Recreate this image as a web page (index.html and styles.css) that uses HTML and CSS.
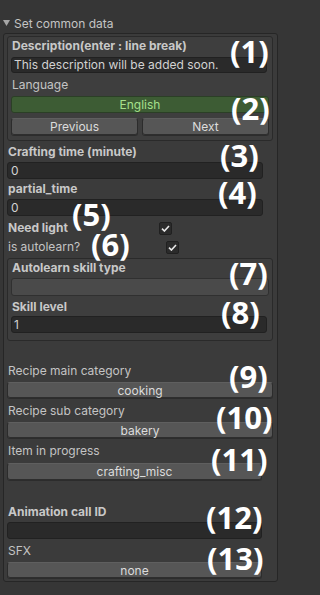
FILE: index.html
```html
<!DOCTYPE html>
<html>
<head>
<meta charset="utf-8">
<link rel="stylesheet" href="styles.css">
</head>
<body>
<div class="page">
  <div class="foldout">
    <svg class="tri" width="7" height="6" viewBox="0 0 7 6"><path d="M0 0 H7 L3.5 6 Z" fill="#a6a6a6"/></svg>
    <span>Set common data</span>
  </div>
  <div class="outer">
    <div class="group g1">
      <div class="lbl bold">Description(enter : line break)</div>
      <div class="field mt2 h16 mr2 pad2">This description will be added soon.</div>
      <div class="lbl mt3">Language</div>
      <div class="lang mt2">English</div>
      <div class="btnrow">
        <div class="btn">Previous</div>
        <div class="btn">Next</div>
      </div>
    </div>

    <div class="lbl bold out mt2">Crafting time (minute)</div>
    <div class="field mt1 mr10">0</div>
    <div class="lbl bold out mt1">partial_time</div>
    <div class="field mt1 mr10">0</div>

    <div class="toggle t1">
      <span class="lbl bold out">Need light</span>
      <span class="check"><svg width="9" height="7" viewBox="0 0 9 7"><path d="M1 3.6 L3.4 6 L8 1" fill="none" stroke="#e8e8e8" stroke-width="1.6"/></svg></span>
    </div>
    <div class="toggle t2">
      <span class="lbl out">is autolearn?</span>
      <span class="check"><svg width="9" height="7" viewBox="0 0 9 7"><path d="M1 3.6 L3.4 6 L8 1" fill="none" stroke="#e8e8e8" stroke-width="1.6"/></svg></span>
    </div>

    <div class="group g2">
      <div class="lbl bold">Autolearn skill type</div>
      <div class="popup mt1"></div>
      <div class="lbl bold mt2">Skill level</div>
      <div class="field mr2 pad2">1</div>
    </div>

    <div class="lbl out norm mt21">Recipe main category</div>
    <div class="btn wide mt2">cooking</div>
    <div class="lbl out norm mt3">Recipe sub category</div>
    <div class="btn wide mt2">bakery</div>
    <div class="lbl out norm mt3">Item in progress</div>
    <div class="btn wide mt3 h18 mr11">crafting_misc</div>

    <div class="lbl bold out mt22">Animation call ID</div>
    <div class="field mt1 mr11"></div>
    <div class="lbl out norm mt3">SFX</div>
    <div class="btn wide mt2 mr11">none</div>
  </div>

  <div class="notes">
    <span class="note n1">(1)</span>
    <span class="note n2">(2)</span>
    <span class="note n3">(3)</span>
    <span class="note n4">(4)</span>
    <span class="note n5">(5)</span>
    <span class="note n6">(6)</span>
    <span class="note n7">(7)</span>
    <span class="note n8">(8)</span>
    <span class="note n9">(9)</span>
    <span class="note n10">(10)</span>
    <span class="note n11">(11)</span>
    <span class="note n12">(12)</span>
    <span class="note n13">(13)</span>
  </div>
</div>
</body>
</html>
```

FILE: styles.css
```css
html, body {
  margin: 0;
  padding: 0;
  background: #363636;
}
.page {
  position: relative;
  width: 292px;
  height: 595px;
  overflow: hidden;
  font-family: Inter, "Noto Sans", sans-serif;
  font-size: 12px;
  color: #c4c4c4;
  padding-top: 15px;
  box-sizing: border-box;
}
.foldout {
  display: flex;
  align-items: center;
  height: 16px;
  padding-left: 3px;
  gap: 4px;
  color: #c4c4c4;
}
.tri { display: block; }
.outer {
  margin: 2px 0 0 3px;
  width: 275px;
  box-sizing: border-box;
  border: 1px solid #262626;
  border-radius: 3px;
  background: #3b3b3b;
  padding: 2px 4px 2px 3px;
  display: flex;
  flex-direction: column;
}
.group {
  border: 1px solid #2a2a2a;
  border-radius: 3px;
  background: #3e3e3e;
  padding: 0 3px 4px 3px;
  display: flex;
  flex-direction: column;
}
.g2 { margin-top: 3px; padding-bottom: 7px; }
.lbl {
  line-height: 18px;
  height: 18px;
  padding-left: 1px;
  white-space: nowrap;
}
.bold { font-weight: 700; color: #c8c8c8; }
.norm { color: #c4c4c4; }
.field {
  height: 17px;
  box-sizing: border-box;
  background: #2a2a2a;
  border: 1px solid #212121;
  border-radius: 3px;
  line-height: 15px;
  padding-left: 3px;
  color: #d2d2d2;
  white-space: nowrap;
  overflow: hidden;
}
.pad2 { padding-left: 2px; }
.h16 { height: 16px; line-height: 14px; }
.h18 { height: 18px; line-height: 16px; }
.lang {
  height: 17px;
  box-sizing: border-box;
  background: #3d5c34;
  border: 1px solid #2b3f26;
  border-radius: 3px;
  text-align: center;
  line-height: 15px;
  color: #a6e08c;
}
.btnrow {
  margin-top: 5px;
  display: grid;
  grid-template-columns: 1fr 1fr;
  gap: 4px;
}
.btn {
  height: 18px;
  box-sizing: border-box;
  background: #565656;
  border: 1px solid #2c2c2c;
  border-top-color: #5f5f5f;
  box-shadow: inset 0 -1px 0 #2e2e2e;
  border-radius: 3px;
  text-align: center;
  line-height: 16px;
  color: #dcdcdc;
}
.btn.wide { height: 17px; line-height: 15px; }
.btn.wide.h18 { height: 18px; line-height: 16px; }
.popup {
  height: 18px;
  box-sizing: border-box;
  background: #4a4a4a;
  border: 1px solid #303030;
  border-radius: 3px;
}
.toggle {
  display: flex;
  align-items: center;
  height: 16px;
}
.toggle .lbl { height: 16px; line-height: 16px; }
.t1 { margin-top: 4px; }
.t2 { margin-top: 3px; }
.t1 .lbl { width: 151px; }
.t2 .lbl { width: 158px; }
.check {
  width: 13px;
  height: 13px;
  box-sizing: border-box;
  background: #2b2b2b;
  border: 1px solid #202020;
  border-radius: 2px;
  display: flex;
  align-items: center;
  justify-content: center;
}
.check svg { display: block; }
.mt1 { margin-top: 1px; }
.mt2 { margin-top: 2px; }
.mt3 { margin-top: 3px; }
.mt21 { margin-top: 21px; }
.mt22 { margin-top: 22px; }
.mr2 { margin-right: 2px; }
.mr10 { margin-right: 10px; }
.mr11 { margin-right: 11px; }

.notes {
  position: absolute;
  inset: 0;
  pointer-events: none;
}
.note {
  position: absolute;
  font-family: "Open Sans", sans-serif;
  font-weight: 700;
  font-size: 31px;
  line-height: 31px;
  color: #ffffff;
  white-space: nowrap;
}
.n1 { left: 230px; top: 36px; }
.n2 { left: 231px; top: 93px; }
.n3 { left: 220px; top: 140px; }
.n4 { left: 218px; top: 177px; }
.n5 { left: 72px; top: 199px; }
.n6 { left: 91px; top: 229px; }
.n7 { left: 229px; top: 258px; }
.n8 { left: 221px; top: 297px; }
.n9 { left: 229px; top: 361px; }
.n10 { left: 216px; top: 402px; }
.n11 { left: 211px; top: 444px; }
.n12 { left: 206px; top: 502px; }
.n13 { left: 207px; top: 543px; }
```
